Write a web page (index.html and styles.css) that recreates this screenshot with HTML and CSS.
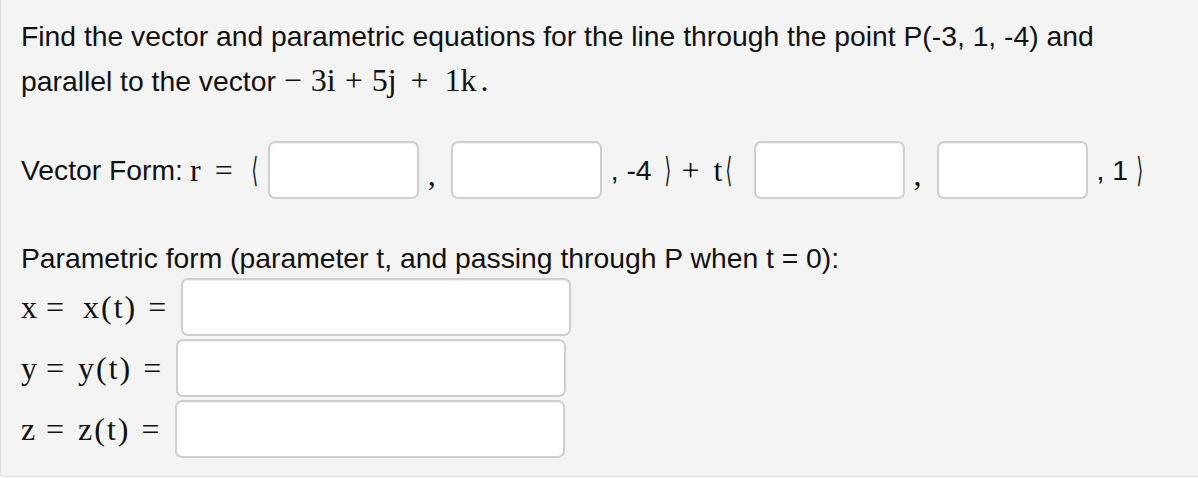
FILE: index.html
```html
<!DOCTYPE html>
<html lang="en">
<head>
<meta charset="utf-8">
<title>Vector and parametric equations</title>
<link rel="stylesheet" href="styles.css">
</head>
<body>
<div class="panel">
  <p class="question">Find the vector and parametric equations for the line through the point P(-3, 1, -4) and<br>parallel to the vector <span class="math"><span class="mo first">−</span><span class="mi">3i</span><span class="mo">+</span><span class="mi">5j</span><span class="mo wide">+</span><span class="mi">1k</span><span class="dot">.</span></span></p>

  <div class="vector-row">
    <span class="txt">Vector Form:</span>
    <span class="math r">r</span>
    <span class="math eq">=</span>
    <span class="br open first">⟨</span>
    <input class="box small" type="text">
    <span class="math comma">,</span>
    <input class="box small second" type="text">
    <span class="txt after">, -4</span>
    <span class="br close">⟩</span>
    <span class="math plus">+</span>
    <span class="math t">t</span>
    <span class="br open">⟨</span>
    <input class="box small third" type="text">
    <span class="math comma">,</span>
    <input class="box small second" type="text">
    <span class="txt after">, 1</span>
    <span class="br close last">⟩</span>
  </div>

  <p class="param-title">Parametric form (parameter t, and passing through P when t = 0):</p>

  <div class="param-row">
    <span class="math label"><span class="v">x</span><span class="eq">=</span><span class="fn fx">x(t)</span><span class="eq2">=</span></span>
    <input class="box wide" type="text">
  </div>
  <div class="param-row">
    <span class="math label"><span class="v">y</span><span class="eq">=</span><span class="fn">y(t)</span><span class="eq2">=</span></span>
    <input class="box wide" type="text">
  </div>
  <div class="param-row">
    <span class="math label"><span class="v">z</span><span class="eq">=</span><span class="fn">z(t)</span><span class="eq2">=</span></span>
    <input class="box wide" type="text">
  </div>
</div>
</body>
</html>
```

FILE: styles.css
```css
html, body {
  margin: 0;
  padding: 0;
  background: #ffffff;
}

.panel {
  box-sizing: border-box;
  height: 477px;
  background: #f4f4f4;
  border-left: 1px solid #dcdcdc;
  border-bottom: 1px solid #dcdcdc;
  border-bottom-left-radius: 5px;
  padding: 14px 0 0 20px;
  font-family: "Liberation Sans", Arial, sans-serif;
  font-size: 28.3px;
  color: #111;
}

.question {
  margin: 0;
  line-height: 44px;
}

.math {
  font-family: "Liberation Serif", "DejaVu Serif", serif;
  font-size: 32px;
}

.question .mo {
  margin: 0 9px;
}

.question .mo.first {
  margin-left: 0;
  margin-right: 9px;
}

.question .mo.wide {
  margin: 0 16px 0 14px;
}

.question .dot {
  margin-left: 4px;
}

/* angle brackets */
.br {
  font-family: "DejaVu Sans", sans-serif;
  font-size: 34px;
  display: inline-block;
  transform: scaleX(0.5);
  width: 10px;
  text-align: center;
}

.vector-row {
  display: flex;
  align-items: center;
  margin-top: 38px;
  height: 58px;
}

.vector-row .r {
  margin-left: 7px;
}

.vector-row .eq {
  margin-left: 14px;
}

.vector-row .br.open.first {
  margin-left: 16px;
  margin-right: 9px;
}

.vector-row .br.open {
  margin-left: 0;
  margin-right: 21px;
}

.vector-row .br.close {
  margin-left: 10px;
}

.vector-row .br.close.last {
  margin-left: 6px;
}

.vector-row .plus {
  margin-left: 10px;
}

.vector-row .t {
  margin-left: 14px;
}

.vector-row .comma {
  margin: 8px 0 0 9px;
}

.box.second {
  margin-left: 15px;
}

.txt.after {
  margin-left: 9px;
}

.box {
  box-sizing: border-box;
  height: 58px;
  background: #ffffff;
  border: 2px solid #cfcfcf;
  border-radius: 7px;
  box-shadow: inset 0 1px 1px rgba(0, 0, 0, 0.06);
  padding: 0 8px;
  font-size: 26px;
  outline: none;
}

.box.small {
  width: 151px;
}

.box.wide {
  width: 390px;
}

.param-title {
  margin: 42px 0 0;
  line-height: 34px;
}

.param-row {
  display: flex;
  align-items: center;
  margin-top: 3px;
}

.param-row:first-of-type {
  margin-top: 6px;
}

.param-row .label {
  display: flex;
  align-items: center;
  white-space: nowrap;
  margin-right: 15px;
}

.param-row .v {
  width: 25px;
}

.param-row .fn {
  margin-left: 14px;
  letter-spacing: 2px;
}

.param-row .fn.fx {
  margin-left: 19px;
}

.param-row .eq2 {
  margin-left: 11px;
}
```
